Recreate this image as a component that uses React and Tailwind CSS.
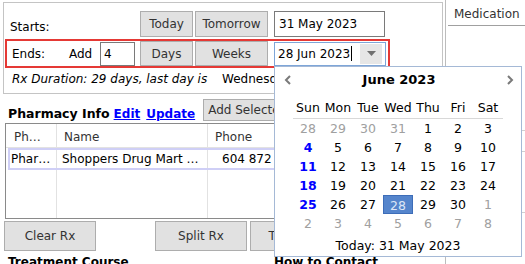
import React from "react";

const Btn = ({ className = "", children }) => (
  <div
    className={`flex items-center justify-center border border-[#adadad] bg-[#e1e1e1] text-[#333] whitespace-nowrap overflow-hidden shrink-0 ${className}`}
  >
    {children}
  </div>
);

const weeks = [
  [28, 29, 30, 31, 1, 2, 3],
  [4, 5, 6, 7, 8, 9, 10],
  [11, 12, 13, 14, 15, 16, 17],
  [18, 19, 20, 21, 22, 23, 24],
  [25, 26, 27, 28, 29, 30, 1],
  [2, 3, 4, 5, 6, 7, 8],
];

function Calendar() {
  return (
    <div className="absolute left-[274px] top-[66px] w-[248px] h-[191px] border border-[#a5b9d6] bg-white flex flex-col text-[12.5px]">
      {/* header */}
      <div className="shrink-0 h-[24px] mt-[1px] flex items-center justify-between pl-[9px] pr-[7px]">
        <svg width="8" height="10" viewBox="0 0 8 10">
          <path d="M6 1 L2 5 L6 9" stroke="#7a7a7a" strokeWidth="2" fill="none" />
        </svg>
        <span className="font-bold text-[13px]">June 2023</span>
        <svg width="8" height="10" viewBox="0 0 8 10">
          <path d="M2 1 L6 5 L2 9" stroke="#7a7a7a" strokeWidth="2" fill="none" />
        </svg>
      </div>
      <div className="shrink-0 ml-[18px] w-[210px] mt-[7px]">
        <div className="grid grid-cols-7 h-[20px] border-b border-[#d8d8d8] items-center">
          {["Sun", "Mon", "Tue", "Wed", "Thu", "Fri", "Sat"].map((d) => (
            <div key={d} className="text-center">{d}</div>
          ))}
        </div>
        {weeks.map((w, wi) => (
          <div key={wi} className="grid grid-cols-7 h-[19px] items-center">
            {w.map((d, di) => {
              const other = (wi === 0 && d > 20) || (wi >= 4 && d < 10);
              const sel = wi === 4 && d === 28;
              let cls = "text-center h-[19px] leading-[19px]";
              if (sel) cls += " bg-[#5585cc] text-[#dde7f6] border border-[#3d6db8] leading-[17px]";
              else if (other) cls += " text-[#a0a0a0]";
              else if (di === 0) cls += " text-[#0000ff] font-bold";
              return (
                <div key={di} className={cls}>
                  {d}
                </div>
              );
            })}
          </div>
        ))}
      </div>
      <div className="shrink-0 text-center mt-[6px] leading-[14px]">Today: 31 May 2023</div>
    </div>
  );
}

export default function App() {
  return (
    <div className="relative w-[525px] h-[264px] overflow-hidden bg-white flex text-[12px] text-black font-['DejaVu_Sans',sans-serif]">
      {/* left column */}
      <div className="w-[445px] shrink-0 flex flex-col">
        <div className="shrink-0 ml-[3px] mt-[2px] w-[440px] h-[92px] border border-[#c4c4c4] pt-[8px] flex flex-col">
          <div className="shrink-0 h-[26px] flex items-center">
            <span className="ml-[6px] w-[130px] pt-[6px]">Starts:</span>
            <Btn className="w-[53px] h-[26px]">Today</Btn>
            <Btn className="ml-[2px] w-[73px] h-[26px]">Tomorrow</Btn>
            <div className="ml-[6px] w-[111px] h-[26px] border border-[#7a7a7a] flex items-center px-[4px]">
              31 May 2023
            </div>
          </div>
          <div className="shrink-0 mt-[2px] ml-[1px] w-[385px] h-[29px] border-2 border-[#e53935] flex items-center">
            <span className="ml-[5px] w-[57px]">Ends:</span>
            <span className="w-[31px]">Add</span>
            <div className="w-[35px] h-[24px] border border-[#7a7a7a] flex items-center px-[3px]">4</div>
            <Btn className="ml-[5px] w-[53px] h-[25px]">Days</Btn>
            <Btn className="ml-[2px] w-[73px] h-[25px]">Weeks</Btn>
            <div className="ml-[6px] w-[112px] h-[24px] border border-[#7ea6d8] flex items-center">
              <span className="pl-[3px]">28 Jun 2023</span>
              <span className="w-[1px] h-[15px] bg-black ml-[1px]" />
              <div className="ml-auto mr-[3px] w-[22px] h-[20px] bg-[#e6e6e6] flex items-center justify-center">
                <svg width="9" height="5" viewBox="0 0 9 5">
                  <path d="M0 0 L9 0 L4.5 5 Z" fill="#707070" />
                </svg>
              </div>
            </div>
          </div>
          <div className="shrink-0 h-[22px] flex items-center whitespace-nowrap">
            <span className="ml-[8px] w-[210px] italic">Rx Duration: 29 days, last day is</span>
            <span>Wednesday, 28 June 2023</span>
          </div>
        </div>

        <div className="shrink-0 mt-[3px] h-[26px] flex items-end whitespace-nowrap">
          <span className="ml-[8px] font-bold text-[12.5px] leading-[18px]">Pharmacy Info</span>
          <span className="ml-[4px] font-bold text-[#0000ff] underline leading-[18px]">Edit</span>
          <span className="ml-[6px] font-bold text-[#0000ff] underline leading-[18px]">Update</span>
          <Btn className="ml-[8px] mb-[2px] w-[120px] h-[22px] justify-start pl-[4px]">Add Selected</Btn>
        </div>

        <div className="shrink-0 ml-[5px] w-[437px] h-[96px] border border-[#8a8a8a] flex flex-col">
          <div className="shrink-0 h-[24px] flex border-b border-[#e2e2e2] text-[#333]">
            <span className="w-[51px] pl-[8px] pt-[3px] border-r border-[#e2e2e2] flex items-center">Ph…</span>
            <span className="w-[151px] pl-[7px] pt-[3px] border-r border-[#e2e2e2] flex items-center">Name</span>
            <span className="pl-[7px] pt-[3px] flex items-center">Phone</span>
          </div>
          <div className="shrink-0 ml-[2px] h-[22px] border-2 border-[#cfcff6] flex items-center whitespace-nowrap">
            <span className="w-[47px] pl-[1px] border-r border-[#e2e2e2] h-full flex items-center">Phar…</span>
            <span className="w-[151px] pl-[5px] border-r border-[#e2e2e2] h-full flex items-center">Shoppers Drug Mart …</span>
            <span className="pl-[14px]">604 872 2811</span>
          </div>
          <div className="flex-1 flex">
            <div className="w-[51px] border-r border-[#e2e2e2]" />
            <div className="w-[151px] border-r border-[#e2e2e2]" />
          </div>
        </div>

        <div className="shrink-0 mt-[2px] h-[30px] flex">
          <Btn className="ml-[4px] w-[92px] h-[30px]">Clear Rx</Btn>
          <Btn className="ml-[59px] w-[92px] h-[30px]">Split Rx</Btn>
          <Btn className="ml-[3px] w-[92px] h-[30px]">Template</Btn>
        </div>
        <div className="shrink-0 flex font-bold whitespace-nowrap leading-[14px] mt-[4px]">
          <span className="ml-[8px] w-[266px]">Treatment Course</span>
          <span>How to Contact</span>
        </div>
      </div>

      {/* right column */}
      <div className="flex-1 border-l border-[#bcbcbc] flex flex-col">
        <div className="shrink-0 h-[24px] ml-[2px] mt-[2px] flex items-center pl-[6px] border-b border-[#a0a0a0] text-[#333]">
          Medication
        </div>
        <div className="flex-1 flex flex-col">
          <div className="mt-[104px] border-t border-[#d0d0d0]" />
          <div className="mt-[20px] border-t border-[#d0d0d0]" />
          <div className="mt-[60px] border-t border-[#d0d0d0]" />
        </div>
      </div>

      <Calendar />
    </div>
  );
}
